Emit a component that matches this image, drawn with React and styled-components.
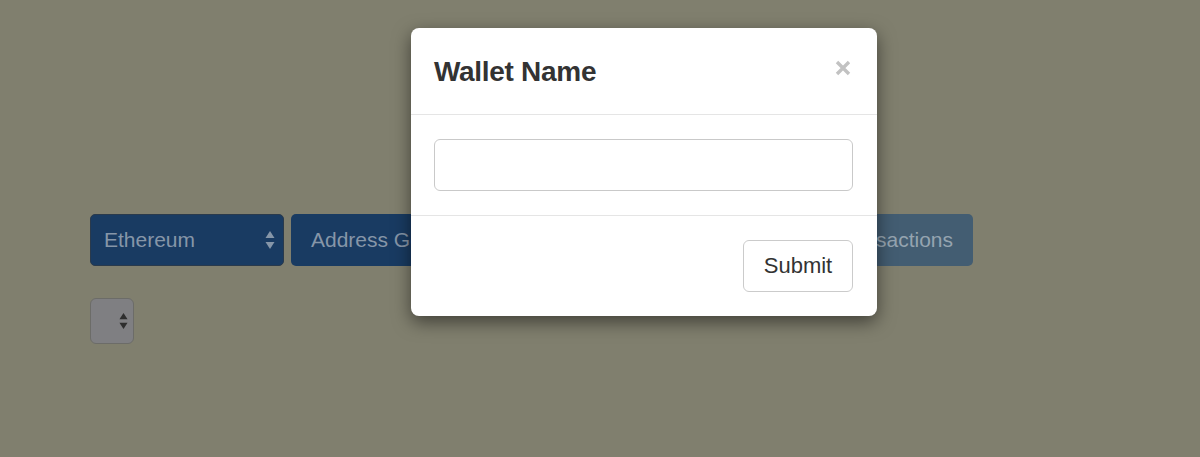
import React from 'react'
import styled, { createGlobalStyle } from 'styled-components'

const GlobalStyle = createGlobalStyle`
  html, body {
    margin: 0;
    padding: 0;
    background: #807f6e;
    font-family: "Liberation Sans", Arial, Helvetica, sans-serif;
  }
`

const Page = styled.div`
  width: 1200px;
  height: 457px;
  position: relative;
  overflow: hidden;
  background: #807f6e;
  padding: 214px 0 0 90px;
  box-sizing: border-box;
`

const Toolbar = styled.div`
  display: flex;
  gap: 7px;
  width: 883px;
  height: 52px;
`

const ControlBase = `
  box-sizing: border-box;
  height: 52px;
  border-radius: 5px;
  font-family: "Liberation Sans", Arial, sans-serif;
  font-size: 21px;
  display: flex;
  align-items: center;
  padding: 0 20px;
`

const SelectBox = styled.div`
  ${ControlBase}
  width: 194px;
  padding: 0 8px 0 13px;
  justify-content: space-between;
  background: #193b62;
  border: 1px solid #2a3a4c;
  color: #8696a8;
`

const NavButton = styled.div`
  ${ControlBase}
  flex: ${props => (props.grow ? 1 : 'none')};
  background: ${props => (props.active ? '#435d72' : '#193b62')};
  color: ${props => (props.active ? '#95a4b0' : '#8696a8')};
  white-space: nowrap;
`

const SmallSelect = styled.div`
  box-sizing: border-box;
  margin-top: 32px;
  width: 44px;
  height: 46px;
  border-radius: 6px;
  background: #7f7f82;
  border: 1.5px solid #6c6c68;
  display: flex;
  align-items: center;
  justify-content: flex-end;
  padding-right: 5px;
`

const Arrows = ({ color, size = 10 }) => (
  <svg width={size} height={size * 2} viewBox="0 0 10 20">
    <path d="M5 1 L9.5 8 L0.5 8 Z" fill={color} />
    <path d="M5 19 L9.5 12 L0.5 12 Z" fill={color} />
  </svg>
)

const Modal = styled.div`
  position: absolute;
  left: 411px;
  top: 28px;
  width: 466px;
  background: #fff;
  border-radius: 8px;
  box-shadow: 0 6px 18px rgba(0, 0, 0, 0.5);
  overflow: hidden;
`

const ModalHeader = styled.div`
  height: 87px;
  box-sizing: border-box;
  padding: 2px 26px 0 23px;
  display: flex;
  align-items: center;
  justify-content: space-between;
  border-bottom: 1px solid #e5e5e5;
`

const Title = styled.h4`
  margin: 0;
  font-size: 28px;
  font-weight: 700;
  color: #333;
  letter-spacing: -0.3px;
`

const CloseButton = styled.button`
  border: none;
  background: none;
  padding: 0;
  margin-top: -8px;
  display: flex;
  cursor: pointer;
`

const ModalBody = styled.div`
  padding: 24px 24px 24px 23px;
  border-bottom: 1px solid #e5e5e5;
`

const TextInput = styled.input`
  display: block;
  box-sizing: border-box;
  width: 419px;
  height: 52px;
  border: 1.5px solid #c9c9c9;
  border-radius: 6px;
  outline: none;
  font-size: 20px;
  padding: 0 12px;
`

const ModalFooter = styled.div`
  padding: 24px 24px 24px 23px;
  display: flex;
  justify-content: flex-end;
`

const SubmitButton = styled.button`
  box-sizing: border-box;
  width: 110px;
  height: 52px;
  background: #fff;
  border: 1.5px solid #cbcbcb;
  border-radius: 6px;
  font-family: "Liberation Sans", Arial, sans-serif;
  font-size: 22px;
  color: #333;
  cursor: pointer;
`

export default function App() {
  return (
    <>
      <GlobalStyle />
      <Page>
        <Toolbar>
          <SelectBox>
            <span>Ethereum</span>
            <Arrows color="#8696a8" />
          </SelectBox>
          <NavButton>Address Generator</NavButton>
          <NavButton grow>Wallets</NavButton>
          <NavButton active>Transactions</NavButton>
        </Toolbar>
        <SmallSelect>
          <Arrows color="#2e2e2e" size={9} />
        </SmallSelect>

        <Modal>
          <ModalHeader>
            <Title>Wallet Name</Title>
            <CloseButton aria-label="Close">
              <svg width="16" height="16" viewBox="0 0 16 16">
                <path d="M2 2 L14 14 M14 2 L2 14" stroke="#c2c2c2" strokeWidth="3.4" />
              </svg>
            </CloseButton>
          </ModalHeader>
          <ModalBody>
            <TextInput type="text" />
          </ModalBody>
          <ModalFooter>
            <SubmitButton>Submit</SubmitButton>
          </ModalFooter>
        </Modal>
      </Page>
    </>
  )
}
